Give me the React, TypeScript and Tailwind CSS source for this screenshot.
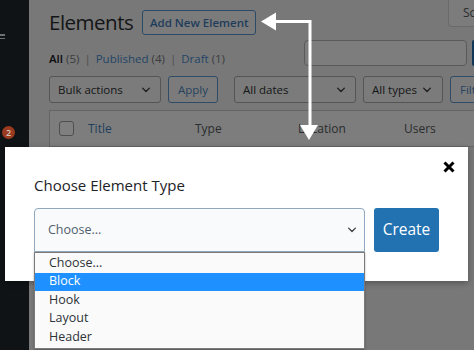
import React from "react";

function Chevron({ className = "" }: { className?: string }) {
  return (
    <svg viewBox="0 0 12 8" className={className} fill="none" stroke="currentColor" strokeWidth="1.8" strokeLinecap="round" strokeLinejoin="round">
      <path d="M1.5 1.5 L6 6 L10.5 1.5" />
    </svg>
  );
}

export default function App() {
  return (
    <div
      className="relative w-[474px] h-[350px] overflow-hidden flex bg-[#787878]"
      style={{ fontFamily: '"Open Sans", "Noto Sans", Arial, sans-serif' }}
    >
      {/* Sidebar */}
      <div className="w-[29px] shrink-0 bg-[#0f1315] flex flex-col">
        <div className="mt-[34px] flex flex-col gap-[2px]">
          <div className="w-[5px] h-[1.5px] bg-[#6d6f72]" />
          <div className="w-[5px] h-[1.5px] bg-[#6d6f72]" />
        </div>
        <div className="mt-[87px] ml-[2px] w-[13px] h-[13px] rounded-full bg-[#9a3a1e] flex items-center justify-center text-[9px] font-semibold text-[#d8c8c0] leading-none">
          2
        </div>
      </div>

      {/* Main */}
      <div className="flex-1 min-w-0 pl-[20px] flex flex-col">
        {/* Row 1 */}
        <div className="flex items-start h-[35px]">
          <div className="mt-[10px] flex items-center gap-[9px]">
            <h1 className="text-[20.5px] leading-[25px] text-[#141516] tracking-[-0.5px]">Elements</h1>
            <div className="h-[25px] w-[114px] flex items-center justify-center border border-[#2b4a68] rounded-[3px] text-[11.5px] font-semibold text-[#1f3d5b] bg-[#7b7b7b] whitespace-nowrap">
              Add New Element
            </div>
          </div>
          <div className="ml-auto h-[27px] w-[26px] shrink-0 border border-[#6a6a6a] border-t-0 border-r-0 rounded-bl-[4px] bg-[#7c7c7c] pl-[14px] flex items-center text-[12px] text-[#2a2c2e] overflow-hidden whitespace-nowrap">
            Screen Options
          </div>
        </div>

        {/* Row 2 */}
        <div className="mt-[5px] h-[26px] flex items-end">
          <div className="flex items-center text-[11.5px] leading-[16px] whitespace-nowrap mb-[-1px]">
            <span className="text-[#0c0d0e] font-semibold">All</span>
            <span className="ml-[3px] text-[#3a3c3e]">(5)</span>
            <span className="mx-[5px] text-[#4a4c4e]">|</span>
            <span className="text-[#234566]">Published</span>
            <span className="ml-[3px] text-[#3a3c3e]">(4)</span>
            <span className="mx-[5px] text-[#4a4c4e]">|</span>
            <span className="text-[#234566]">Draft</span>
            <span className="ml-[3px] text-[#3a3c3e]">(1)</span>
          </div>
          <div className="ml-auto flex items-center self-stretch">
            <div className="w-[163px] h-[26px] border border-[#5a5a5a] rounded-[4px] bg-[#7d7d7d]" />
            <div className="ml-[5px] w-[2px] h-[26px] rounded-l-[3px] bg-[#113858] shrink-0" />
          </div>
        </div>

        {/* Row 3 */}
        <div className="mt-[10px] h-[27px] flex items-center gap-[7px] whitespace-nowrap text-[11.5px]">
          <div className="w-[112px] h-[27px] shrink-0 border border-[#555] rounded-[3px] bg-[#7b7b7b] flex items-center justify-between pl-[8px] pr-[9px] text-[#151617]">
            <span>Bulk actions</span>
            <Chevron className="w-[10px] h-[6px] text-[#1d1e1f]" />
          </div>
          <div className="w-[50px] h-[27px] shrink-0 border border-[#2f4b66] rounded-[3px] bg-[#7b7b7b] flex items-center justify-center text-[#26435f]">
            Apply
          </div>
          <div className="ml-[9px] w-[122px] h-[27px] shrink-0 border border-[#555] rounded-[3px] bg-[#7b7b7b] flex items-center justify-between pl-[8px] pr-[9px] text-[#151617]">
            <span>All dates</span>
            <Chevron className="w-[10px] h-[6px] text-[#1d1e1f]" />
          </div>
          <div className="w-[80px] h-[27px] shrink-0 border border-[#555] rounded-[3px] bg-[#7b7b7b] flex items-center pl-[8px] gap-[5px] text-[#151617]">
            <span>All types</span>
            <Chevron className="w-[10px] h-[6px] text-[#1d1e1f]" />
          </div>
          <div className="w-[40px] h-[27px] shrink-0 border border-[#2f4b66] rounded-[3px] bg-[#7b7b7b] flex items-center pl-[9px] text-[#26435f]">
            Filter
          </div>
        </div>

        {/* Table */}
        <div className="mt-[7px] mr-[-20px] border border-[#646464] bg-[#7d7d7d]">
          <div className="h-[35px] flex items-center text-[12px] whitespace-nowrap">
            <div className="ml-[9px] w-[15px] h-[15px] border border-[#4e4e4e] rounded-[3px] bg-[#7f7f7f]" />
            <span className="ml-[14px] w-[107px] text-[#213f5c]">Title</span>
            <span className="w-[103px] text-[#2a2c2e]">Type</span>
            <span className="w-[106px] text-[#2a2c2e]">Location</span>
            <span className="text-[#2a2c2e]">Users</span>
          </div>
        </div>
      </div>

      {/* Arrow annotation */}
      <svg className="absolute left-0 top-0 pointer-events-none" width="474" height="350" viewBox="0 0 474 350">
        <path d="M272 21.5 H310 V127" fill="none" stroke="#ffffff" strokeWidth="3" />
        <polygon points="261,21.5 276,12.5 276,30.5" fill="#ffffff" />
        <polygon points="300,125 318,125 309,140" fill="#ffffff" />
      </svg>

      {/* Modal */}
      <div className="absolute left-[5px] top-[147px] w-[463px] h-[134px] bg-white shadow-[0_2px_6px_rgba(0,0,0,0.3)] pl-[29px] pt-[28px]">
        <svg className="absolute right-[13px] top-[14px] w-[12px] h-[12px]" viewBox="0 0 12 12">
          <path d="M1.5 1.5 L10.5 10.5 M10.5 1.5 L1.5 10.5" stroke="#000" strokeWidth="3" strokeLinecap="butt" />
        </svg>
        <div className="text-[15px] leading-[20px] text-[#1d2327]">Choose Element Type</div>
        <div className="mt-[13px] flex gap-[9px]">
          <div className="w-[331px] h-[44px] border border-[#8fa8c0] rounded-t-[4px] bg-[#f9fafb] flex items-center justify-between pl-[13px] pr-[7px] text-[12.5px] text-[#50606e]">
            <span>Choose...</span>
            <Chevron className="w-[10px] h-[6px] text-[#3c434a]" />
          </div>
          <div className="w-[65px] h-[44px] rounded-[3px] bg-[#2271b1] flex items-center justify-center text-[15.5px] text-white">
            Create
          </div>
        </div>
      </div>

      {/* Open dropdown list */}
      <div className="absolute left-[34px] top-[252px] w-[331px] border border-[#7a7a7a] bg-[#fafafa] shadow-[0_1px_2px_rgba(0,0,0,0.3)] text-[12.5px] text-[#2e3338] pt-[1px] pb-[1px]">
        <div className="h-[18.5px] flex items-center pl-[14px]">Choose...</div>
        <div className="h-[18.5px] flex items-center pl-[14px] bg-[#1e90ff] text-white">Block</div>
        <div className="h-[18.5px] flex items-center pl-[14px]">Hook</div>
        <div className="h-[18.5px] flex items-center pl-[14px]">Layout</div>
        <div className="h-[18.5px] flex items-center pl-[14px]">Header</div>
      </div>
    </div>
  );
}
